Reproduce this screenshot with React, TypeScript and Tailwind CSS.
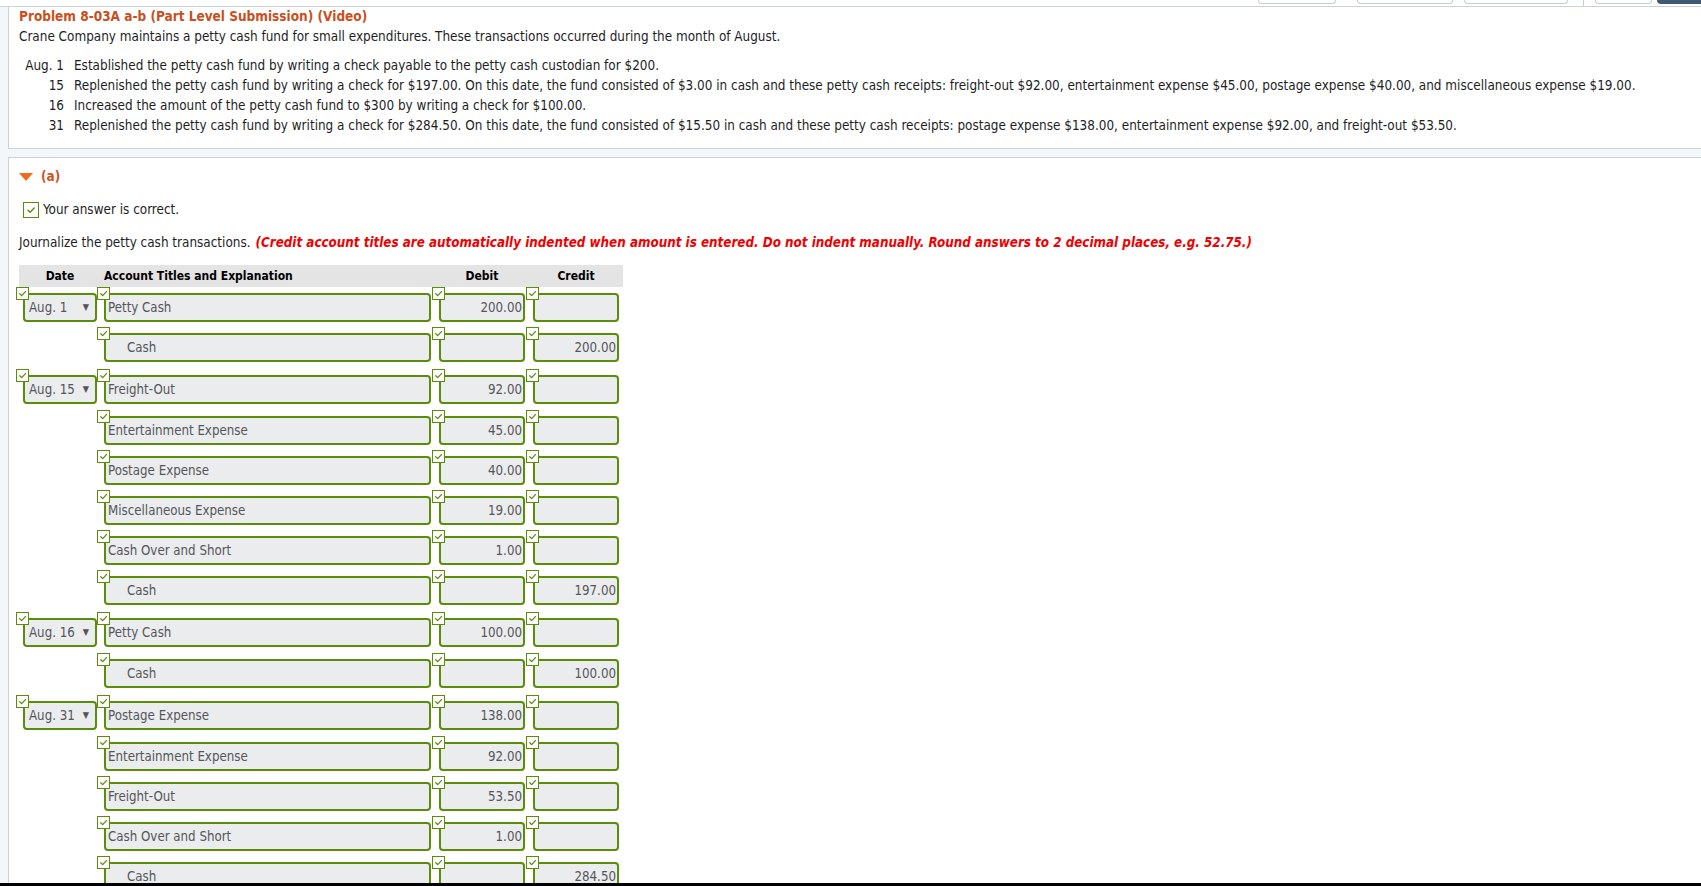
import React from 'react';

type Row = {
  date?: string;
  account: string;
  debit?: string;
  credit?: string;
};

const rows: Row[] = [
  { date: 'Aug. 1', account: 'Petty Cash', debit: '200.00' },
  { account: 'Cash', credit: '200.00' },
  { date: 'Aug. 15', account: 'Freight-Out', debit: '92.00' },
  { account: 'Entertainment Expense', debit: '45.00' },
  { account: 'Postage Expense', debit: '40.00' },
  { account: 'Miscellaneous Expense', debit: '19.00' },
  { account: 'Cash Over and Short', debit: '1.00' },
  { account: 'Cash', credit: '197.00' },
  { date: 'Aug. 16', account: 'Petty Cash', debit: '100.00' },
  { account: 'Cash', credit: '100.00' },
  { date: 'Aug. 31', account: 'Postage Expense', debit: '138.00' },
  { account: 'Entertainment Expense', debit: '92.00' },
  { account: 'Freight-Out', debit: '53.50' },
  { account: 'Cash Over and Short', debit: '1.00' },
  { account: 'Cash', credit: '284.50' },
];

const transactions = [
  ['Aug. 1', 'Established the petty cash fund by writing a check payable to the petty cash custodian for $200.'],
  ['15', 'Replenished the petty cash fund by writing a check for $197.00. On this date, the fund consisted of $3.00 in cash and these petty cash receipts: freight-out $92.00, entertainment expense $45.00, postage expense $40.00, and miscellaneous expense $19.00.'],
  ['16', 'Increased the amount of the petty cash fund to $300 by writing a check for $100.00.'],
  ['31', 'Replenished the petty cash fund by writing a check for $284.50. On this date, the fund consisted of $15.50 in cash and these petty cash receipts: postage expense $138.00, entertainment expense $92.00, and freight-out $53.50.'],
];

function Tick({ size = 12 }: { size?: number }) {
  return (
    <svg width={size} height={size} viewBox="0 0 12 12" fill="none">
      <path d="M3 6.3 L5.1 8.3 L9.2 3.9" stroke="#5b8c0a" strokeWidth="1.4" strokeLinecap="round" strokeLinejoin="round" />
    </svg>
  );
}

// small green check badge sitting on the top-left corner of each field
function Badge() {
  return (
    <span className="absolute -left-[9px] -top-[8px] flex h-[13px] w-[13px] items-center justify-center border border-[#5b8c0a] bg-white">
      <Tick size={11} />
    </span>
  );
}

function Field({ children, className = '' }: { children?: React.ReactNode; className?: string }) {
  return (
    <div className={`relative h-[29px] rounded-[4px] border-2 border-[#5b8c0a] bg-[#ebecee] text-[13.2px] text-[#55565a] ${className}`}>
      <Badge />
      {children}
    </div>
  );
}

function JournalRow({ row, index, afterDate }: { row: Row; index: number; afterDate: boolean }) {
  const indented = !!row.credit;
  const spacing = row.date && index > 0 ? 'mt-[2px]' : afterDate && index > 1 ? 'mt-[1px]' : '';
  return (
    <div className={`flex h-[40px] pt-[6px] ${spacing}`}>
      <div className="ml-[4px] w-[74px]">
        {row.date && (
          <Field className="flex items-center justify-between pl-[4px] pr-[6px]">
            <span>{row.date}</span>
            <span className="text-[9px] text-[#555]">▼</span>
          </Field>
        )}
      </div>
      <Field className={`ml-[7px] flex w-[327px] items-center ${indented ? 'pl-[21px]' : 'pl-[2px]'}`}>
        <span>{row.account}</span>
      </Field>
      <Field className="ml-[8px] flex w-[86px] items-center justify-end pr-[1px]">
        <span>{row.debit}</span>
      </Field>
      <Field className="ml-[8px] flex w-[86px] items-center justify-end pr-[1px]">
        <span>{row.credit}</span>
      </Field>
    </div>
  );
}

export default function App() {
  return (
    <div className="flex h-[886px] w-full flex-col overflow-hidden bg-[#f4f7fa] font-['DejaVu_Sans_Condensed','DejaVu_Sans',sans-serif] font-stretch-condensed text-[13.4px] text-[#1e1e1e]">
      {/* top toolbar, mostly scrolled off */}
      <div className="flex h-[7px] shrink-0 items-start border-b border-[#c9d1db] bg-white">
        <div className="ml-[1258px] h-[4px] w-[79px] rounded-b-[4px] border border-t-0 border-[#c5cdd8]" />
        <div className="ml-[21px] h-[4px] w-[98px] rounded-b-[4px] border border-t-0 border-[#c5cdd8]" />
        <div className="ml-[11px] h-[4px] w-[105px] rounded-b-[4px] border border-t-0 border-[#c5cdd8]" />
        <div className="ml-[15px] h-[6px] w-px bg-[#c5cdd8]" />
        <div className="ml-[11px] h-[4px] w-[58px] rounded-b-[4px] border border-t-0 border-[#c5cdd8]" />
        <div className="ml-[5px] h-[4px] w-[45px] rounded-bl-[4px] bg-[#3f5873]" />
      </div>

      <div className="min-h-0 flex-1 overflow-hidden pl-[8px]">
        {/* problem statement */}
        <div className="border-b border-l border-[#c9d1db] bg-white pb-[12px] pl-[10px]">
          <div className="text-[13.5px] font-bold leading-[18px] text-[#c94f1d]">
            Problem 8-03A a-b (Part Level Submission) (Video)
          </div>
          <div className="mt-[3px] leading-[18px]">
            Crane Company maintains a petty cash fund for small expenditures. These transactions occurred during the month of August.
          </div>
          <div className="mt-[10px]">
            {transactions.map(([d, text]) => (
              <div key={d} className="flex h-[20px] items-center whitespace-nowrap">
                <span className="w-[45px] text-right">{d}</span>
                <span className="ml-[10px]">{text}</span>
              </div>
            ))}
          </div>
        </div>

        {/* part (a) */}
        <div className="mt-[8px] h-full border-l border-t border-[#c9d1db] bg-white pl-[10px] pt-[10px]">
          <div className="flex h-[18px] items-center">
            <svg width="14" height="8" viewBox="0 0 14 8">
              <path d="M0 0 H14 L7 8 Z" fill="#f26a1b" />
            </svg>
            <span className="ml-[8px] font-bold text-[#d0541f]">(a)</span>
          </div>

          <div className="mt-[15px] flex h-[18px] items-center">
            <span className="ml-[4px] flex h-[16px] w-[16px] items-center justify-center border-[1.5px] border-[#5b8c0a] bg-white">
              <Tick size={12} />
            </span>
            <span className="ml-[4px]">Your answer is correct.</span>
          </div>

          <div className="mt-[15px] flex h-[18px] items-center whitespace-nowrap">
            <span>Journalize the petty cash transactions.</span>
            <span className="ml-[5px] text-[13.3px] font-bold italic text-[#f00000]">
              (Credit account titles are automatically indented when amount is entered. Do not indent manually. Round answers to 2 decimal places, e.g. 52.75.)
            </span>
          </div>

          <div className="mt-[13px] flex h-[22px] w-[604px] items-center bg-[#e4e4e4] text-[12px] font-bold text-black">
            <span className="ml-[4px] w-[74px] text-center">Date</span>
            <span className="ml-[7px] w-[327px]">Account Titles and Explanation</span>
            <span className="ml-[8px] w-[86px] text-center">Debit</span>
            <span className="ml-[8px] w-[86px] text-center">Credit</span>
          </div>

          <div>
            {rows.map((r, i) => (
              <JournalRow key={i} row={r} index={i} afterDate={i > 0 && !!rows[i - 1].date} />
            ))}
          </div>
        </div>
      </div>

      <div className="h-[3px] shrink-0 bg-black" />
    </div>
  );
}
